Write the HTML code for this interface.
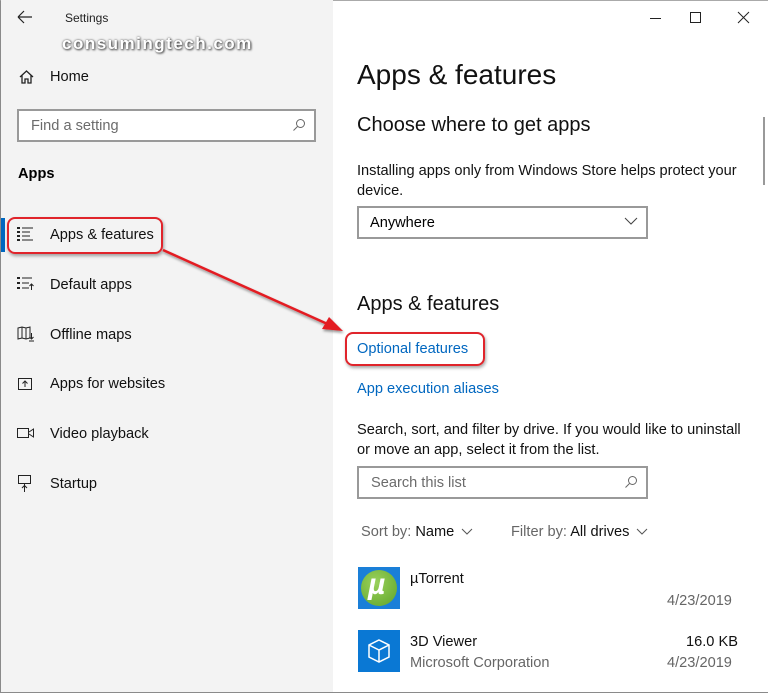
<!DOCTYPE html>
<html><head><meta charset="utf-8"><style>
*{margin:0;padding:0;box-sizing:border-box}
body{width:768px;height:693px;overflow:hidden;font-family:"Liberation Sans",sans-serif;color:#000;position:relative;background:#fff}
.win{position:absolute;left:0;top:0;width:768px;height:693px;border:1px solid #8a8a8a;border-right:none;border-top:1px solid #aaa}
.side{position:absolute;left:1px;top:0;width:332px;height:692px;background:#f3f3f3}
.t{position:absolute;white-space:nowrap}
.nav{font-size:14.6px;color:#111}
.box{position:absolute;border:2px solid #999;background:#fff}
.ph{color:#6b6b6b;font-size:14.6px}
.red{position:absolute;border:2px solid #e0242b;border-radius:8px;box-shadow:1px 2px 3px rgba(0,0,0,.35)}
.link{color:#0067c0;font-size:14.6px}
svg{position:absolute}
</style></head><body>
<div class="win"></div>
<div class="side"></div>
<svg style="left:17px;top:10px" width="16" height="14"><path d="M1 7H15M1 7L7 1M1 7L7 13" stroke="#222" stroke-width="1.2" fill="none"/></svg>
<div class="t" style="left:65px;top:11px;font-size:12px;color:#222">Settings</div>
<div class="t" style="left:62px;top:34px;font-size:17px;font-weight:bold;color:#fff;letter-spacing:1.5px;text-shadow:0 0 2px #555,1px 1px 2px #444">consumingtech.com</div>
<svg style="left:18px;top:69px" width="17" height="16"><path d="M2 8L8.5 2L15 8M4 6.5V14H7V10H10V14H13V6.5" stroke="#222" stroke-width="1.3" fill="none"/></svg>
<div class="t nav" style="left:50px;top:69px">Home</div>
<div class="box" style="left:17px;top:109px;width:299px;height:33px"></div>
<div class="t ph" style="left:31px;top:118px">Find a setting</div>
<svg style="left:292px;top:118px" width="14" height="14"><circle cx="8.5" cy="5.5" r="4" stroke="#666" fill="none"/><path d="M5.5 8.5L1.5 12.5" stroke="#666"/></svg>
<div class="t" style="left:18px;top:166px;font-size:14.6px;font-weight:bold">Apps</div>
<div style="position:absolute;left:1px;top:218px;width:4px;height:34px;background:#0067c0"></div>
<div class="red" style="left:7px;top:217px;width:156px;height:37px"></div>
<svg style="left:17px;top:227px" width="18" height="14"><g fill="#222"><rect x="0" y="0" width="3" height="2"/><rect x="0" y="4" width="3" height="2"/><rect x="0" y="8" width="3" height="2"/><rect x="0" y="12" width="3" height="2"/><rect x="5" y="0.5" width="11" height="1"/><rect x="5" y="4.5" width="8" height="1"/><rect x="5" y="8.5" width="8" height="1"/><rect x="5" y="12.5" width="11" height="1"/></g></svg>
<div class="t nav" style="left:50px;top:227px">Apps &amp; features</div>
<svg style="left:17px;top:277px" width="18" height="14"><g fill="#222"><rect x="0" y="0" width="3" height="2"/><rect x="0" y="5" width="3" height="2"/><rect x="0" y="10" width="3" height="2"/><rect x="5" y="0.5" width="10" height="1"/><rect x="5" y="5.5" width="7" height="1"/><rect x="5" y="10.5" width="7" height="1"/></g><path d="M14.5 13V7M12.5 9L14.5 7L16.5 9" stroke="#222" fill="none"/></svg>
<div class="t nav" style="left:50px;top:277px">Default apps</div>
<svg style="left:17px;top:326px" width="18" height="16"><path d="M1 2L5 1L9 2L13 1V12L9 13L5 12L1 13ZM5 1V12M9 2V13" stroke="#222" fill="none"/><path d="M14.5 7V13M12.5 11L14.5 13L16.5 11M12 15H17" stroke="#222" fill="none"/></svg>
<div class="t nav" style="left:50px;top:327px">Offline maps</div>
<svg style="left:18px;top:377px" width="16" height="14"><rect x="0.5" y="1.5" width="13" height="11" stroke="#222" fill="none"/><path d="M7 10V4M4.5 6.5L7 4L9.5 6.5" stroke="#222" fill="none"/></svg>
<div class="t nav" style="left:50px;top:376px">Apps for websites</div>
<svg style="left:17px;top:427px" width="18" height="12"><rect x="0.5" y="1.5" width="11" height="9" stroke="#222" fill="none"/><path d="M12 5L16.5 2V10L12 7" stroke="#222" fill="none"/></svg>
<div class="t nav" style="left:50px;top:426px">Video playback</div>
<svg style="left:18px;top:475px" width="16" height="18"><rect x="0.5" y="0.5" width="12" height="8" stroke="#222" fill="none"/><path d="M6.5 9V17M4 13L6.5 10.5L9 13" stroke="#222" fill="none"/></svg>
<div class="t nav" style="left:50px;top:476px">Startup</div>

<div style="position:absolute;left:650px;top:18px;width:11px;height:1px;background:#222"></div>
<div style="position:absolute;left:690px;top:12px;width:11px;height:11px;border:1px solid #222"></div>
<svg style="left:737px;top:11px" width="13" height="13"><path d="M1 1L12 12M12 1L1 12" stroke="#222"/></svg>
<div style="position:absolute;left:763px;top:117px;width:2px;height:68px;background:#999"></div>

<div class="t" style="left:357px;top:59px;font-size:28px;color:#111">Apps &amp; features</div>
<div class="t" style="left:357px;top:114px;font-size:20px;color:#111">Choose where to get apps</div>
<div class="t" style="left:357px;top:161px;font-size:14.6px;line-height:20px;color:#111">Installing apps only from Windows Store helps protect your<br>device.</div>
<div class="box" style="left:357px;top:206px;width:291px;height:33px"></div>
<div class="t" style="left:370px;top:215px;font-size:14.6px">Anywhere</div>
<svg style="left:624px;top:217px" width="14" height="9"><path d="M1 1L7 7L13 1" stroke="#444" fill="none"/></svg>
<div class="t" style="left:357px;top:293px;font-size:20px;color:#111">Apps &amp; features</div>
<div class="red" style="left:345px;top:332px;width:140px;height:34px"></div>
<div class="t link" style="left:357px;top:341px">Optional features</div>
<div class="t link" style="left:357px;top:381px">App execution aliases</div>
<div class="t" style="left:357px;top:420px;font-size:14.6px;line-height:20px;color:#111">Search, sort, and filter by drive. If you would like to uninstall<br>or move an app, select it from the list.</div>
<div class="box" style="left:357px;top:466px;width:291px;height:33px"></div>
<div class="t ph" style="left:371px;top:475px">Search this list</div>
<svg style="left:624px;top:475px" width="14" height="14"><circle cx="8.5" cy="5.5" r="4" stroke="#666" fill="none"/><path d="M5.5 8.5L1.5 12.5" stroke="#666"/></svg>
<div class="t" style="left:361px;top:524px;font-size:14.6px;color:#666">Sort by: <span style="color:#111">Name</span></div>
<svg style="left:461px;top:528px" width="12" height="8"><path d="M1 1L6 6L11 1" stroke="#555" fill="none"/></svg>
<div class="t" style="left:511px;top:524px;font-size:14.6px;color:#666">Filter by: <span style="color:#111">All drives</span></div>
<svg style="left:636px;top:528px" width="12" height="8"><path d="M1 1L6 6L11 1" stroke="#555" fill="none"/></svg>

<div style="position:absolute;left:358px;top:567px;width:42px;height:42px;background:#1a7fd8"></div>
<div style="position:absolute;left:361px;top:570px;width:36px;height:36px;border-radius:50%;background:radial-gradient(circle at 40% 35%,#9ad15b,#5ea428)"></div>
<div class="t" style="left:368px;top:568px;font-size:30px;font-weight:bold;color:#fff;font-style:italic">µ</div>
<div class="t" style="left:410px;top:571px;font-size:14.6px;color:#111">µTorrent</div>
<div class="t" style="left:667px;top:593px;font-size:14.6px;color:#666">4/23/2019</div>
<div style="position:absolute;left:358px;top:630px;width:42px;height:42px;background:#0a78d4"></div>
<svg style="left:366px;top:638px" width="26" height="26"><path d="M13 2L23 7V19L13 24L3 19V7ZM3 7L13 12L23 7M13 12V24" stroke="#fff" stroke-width="1.5" fill="none"/></svg>
<div class="t" style="left:410px;top:634px;font-size:14.6px;color:#111">3D Viewer</div>
<div class="t" style="left:410px;top:655px;font-size:14.6px;color:#666">Microsoft Corporation</div>
<div class="t" style="left:686px;top:634px;font-size:14.6px;color:#111">16.0 KB</div>
<div class="t" style="left:667px;top:655px;font-size:14.6px;color:#666">4/23/2019</div>

<svg style="left:0;top:0" width="768" height="693"><defs><filter id="s"><feDropShadow dx="1" dy="2" stdDeviation="1.2" flood-opacity=".4"/></filter></defs><g filter="url(#s)"><path d="M163 250L332 326" stroke="#e31b23" stroke-width="2.5"/><path d="M343 331L322 329L329 317Z" fill="#e31b23"/></g></svg>
</body></html>
